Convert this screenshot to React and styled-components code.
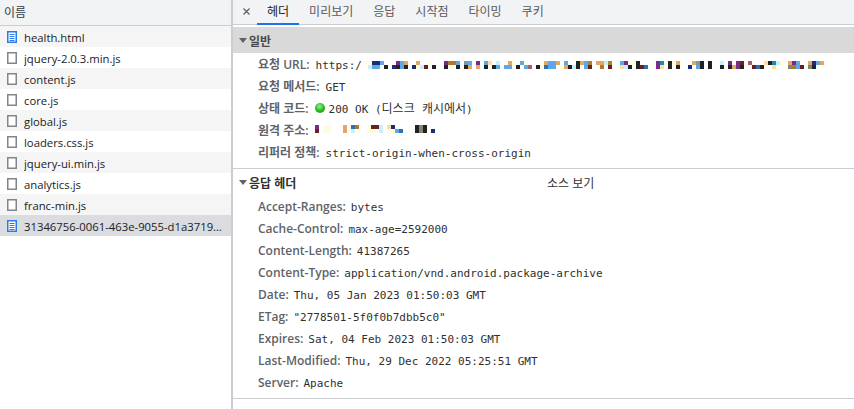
import React from 'react'
import styled, { createGlobalStyle } from 'styled-components'

const SANS = `"Open Sans", "Noto Sans CJK KR", sans-serif`
const MONO = `"DejaVu Sans Mono", "Noto Sans CJK KR", monospace`

const files = [
  { name: 'health.html', doc: true },
  { name: 'jquery-2.0.3.min.js' },
  { name: 'content.js' },
  { name: 'core.js' },
  { name: 'global.js' },
  { name: 'loaders.css.js' },
  { name: 'jquery-ui.min.js' },
  { name: 'analytics.js' },
  { name: 'franc-min.js' },
  { name: '31346756-0061-463e-9055-d1a3719c0e5a.apk', doc: true, selected: true }
]

const tabs = ['헤더', '미리보기', '응답', '시작점', '타이밍', '쿠키']

const responseHeaders = [
  ['Accept-Ranges', 'bytes'],
  ['Cache-Control', 'max-age=2592000'],
  ['Content-Length', '41387265'],
  ['Content-Type', 'application/vnd.android.package-archive'],
  ['Date', 'Thu, 05 Jan 2023 01:50:03 GMT'],
  ['ETag', '"2778501-5f0f0b7dbb5c0"'],
  ['Expires', 'Sat, 04 Feb 2023 01:50:03 GMT'],
  ['Last-Modified', 'Thu, 29 Dec 2022 05:25:51 GMT'],
  ['Server', 'Apache']
]

// colours of the mosaic that hides the url and the ip
const mosaicColors = {
  p: '#fffde0',
  l: '#ffdca0',
  c: '#c8f0fa',
  b: '#5da9e8',
  B: '#2f6fb5',
  n: '#1d2a7a',
  u: '#7a2a8a',
  o: '#e3a862',
  r: '#b5762a',
  v: '#a08a30',
  t: '#1d8ab0',
  g: '#7a9aa0',
  k: '#222222',
  d: '#6a2020',
  m: '#a06070',
  G: '#7a8a70'
}

// "<screen x><colour>", two rows of 4px cells
const urlRows = [
  '364p 368p 372n 376n 380b 392p 396u 400b 404o 416o 428p 444u 448r 452r 456b 464g 468b 476u 484b 488l 496c 508o 512p 520b 524p 540p 544o 548b 552b 556o 564b 576k 580o 584b 588v 596o 600o 604c 608v 620b 624u 628p 632p 636k 652p 656u 660t 664p 668k 672p 676o 692o 696g 700k 708k 720c 728u 736u 740d 748m 764l 768k 772t 776c 780p 788o 792u 796b 808o 812n 816b 820o',
  '368c 372b 376b 384k 392n 396k 400b 404k 412n 416p 420c 424d 432k 444k 448p 456k 464k 468o 476o 484k 492k 496b 504b 508b 516k 524b 528m 536k 540p 544B 548b 552b 560p 564o 568k 572c 576k 584b 588d 600r 608d 620l 624c 628k 636k 640d 644B 656u 660l 668k 676k 688n 696b 700k 708k 720k 728k 732o 736u 740k 752d 756B 760k 772l 788G 792r 796b 800d 808G 812k'
]

const ipRows = [
  '316u 324p 328p 344o 352B 356r 368p 372d 376d 380c 388l 392n 416k 420G 424k',
  '316d 324p 328p 344o 352c 368p 372p 380c 388p 392p 396b 400B 416k 420G 424k 432n'
]

const GlobalStyle = createGlobalStyle`
  html, body { margin: 0; padding: 0; background: #fff; }
  body { font-family: ${SANS}; font-size: 12px; color: #202124; }
`

const Page = styled.div`
  display: flex;
  width: 854px;
  height: 409px;
  overflow: hidden;
`

const Sidebar = styled.div`
  width: 231px;
  flex: none;
  border-right: 2px solid #cbcdd1;
`

const NameHeader = styled.div`
  height: 25px;
  line-height: 25px;
  padding-left: 4px;
  background: #f1f3f4;
  border-bottom: 1px solid #cbcdd1;
  color: #303942;
`

const FileRow = styled.div`
  display: flex;
  align-items: center;
  height: 21px;
  padding-left: 7px;
  gap: 5px;
  background: ${({ $selected, $odd }) => ($selected ? '#dadce0' : $odd ? '#f5f5f5' : '#fff')};
`

const FileName = styled.span`
  flex: 1;
  min-width: 0;
  padding-top: 1px;
  padding-right: 9px;
  font-size: 11.3px;
  overflow: hidden;
  white-space: nowrap;
  text-overflow: ellipsis;
`

const Details = styled.div`
  flex: 1;
  min-width: 0;
`

const TabBar = styled.div`
  display: flex;
  align-items: stretch;
  height: 24px;
  background: #f1f3f4;
  border-bottom: 1px solid #cbcdd1;
`

const CloseButton = styled.span`
  display: flex;
  align-items: center;
  justify-content: center;
  width: 24px;
  padding: 0 0 2px 2px;
  box-sizing: border-box;
`

const Tab = styled.div`
  padding: 0 10px;
  line-height: 23px;
  color: ${({ $active }) => ($active ? '#202124' : '#5a5a5a')};
  border-bottom: 2px solid ${({ $active }) => ($active ? '#1a73e8' : 'transparent')};
  margin-bottom: -1px;
`

const Section = styled.div`
  border-bottom: 1px solid #cbcdd1;
  padding-bottom: 5px;
`

const GrayTitle = styled.div`
  display: flex;
  align-items: center;
  height: 26px;
  margin-top: 2px;
  padding-left: 6px;
  gap: 2px;
  background: #d9d9d9;
  font-weight: 700;
  color: #4a4a4a;
`

const PlainTitle = styled.div`
  display: flex;
  align-items: center;
  height: 26px;
  padding-left: 6px;
  gap: 2px;
  font-weight: 700;
  color: #303030;
`

const TitleText = styled.span`
  width: ${({ $width }) => ($width ? `${$width}px` : 'auto')};
  padding-top: 2px;
`

const ViewSource = styled.span`
  padding-top: 2px;
  font-weight: 400;
  color: #303030;
`

const Arrow = styled.span`
  width: 0;
  height: 0;
  border-left: 4px solid transparent;
  border-right: 4px solid transparent;
  border-top: 5px solid #5f6368;
`

const Row = styled.div`
  display: flex;
  align-items: baseline;
  height: 22px;
  line-height: 24px;
  padding-left: 25px;
  white-space: nowrap;
`

const Label = styled.span`
  font-weight: 600;
  color: #5f6368;
  margin-right: ${({ $gap }) => $gap || 5}px;
`

const Value = styled.span`
  font-family: ${MONO};
  font-size: 11px;
  color: #303030;
`

const CjkText = styled.span`
  font-size: 12px;
`

const Mosaic = styled.svg`
  display: block;
  flex: none;
  align-self: center;
  margin-left: ${({ $offset }) => $offset || 0}px;
`

const StatusDot = styled.span`
  width: 10px;
  height: 10px;
  flex: none;
  align-self: center;
  border-radius: 50%;
  margin-right: 4px;
  background: radial-gradient(circle at 45% 35%, #9cf08a, #23b51e 55%, #0c8f10);
`

const DocIcon = ({ doc }) => (
  <svg width='12' height='12' viewBox='0 0 12 12'>
    <rect x='.75' y='.75' width='8.5' height='10.5' fill='#fff' stroke={doc ? '#2a7de9' : '#80868b'} strokeWidth='1.5' />
    {doc && <path d='M2.5 3.5h5M2.5 5.5h5M2.5 7.5h5M2.5 9.5h5' stroke='#2a7de9' strokeWidth='1' />}
  </svg>
)

const CloseIcon = () => (
  <svg width='7' height='7' viewBox='0 0 7 7'>
    <path d='M.5 .5l6 6M6.5 .5l-6 6' stroke='#5f6368' strokeWidth='1.3' fill='none' />
  </svg>
)

const MosaicBlocks = ({ rows, originX, top, width, offset }) => (
  <Mosaic $offset={offset} width={width} height='10' viewBox={`0 0 ${width} 10`}>
    {rows.map((row, r) => row.split(' ').map((cell) => (
      <rect
        key={`${r}-${cell}`}
        x={parseInt(cell, 10) - originX}
        y={r * 4 + top}
        width='4'
        height='4'
        fill={mosaicColors[cell.slice(-1)]}
      />
    )))}
  </Mosaic>
)

export default function App () {
  return (
    <Page>
      <GlobalStyle />
      <Sidebar>
        <NameHeader>이름</NameHeader>
        {files.map((file, i) => (
          <FileRow key={file.name} $odd={i % 2 === 0} $selected={file.selected}>
            <DocIcon doc={file.doc} />
            <FileName>{file.name}</FileName>
          </FileRow>
        ))}
      </Sidebar>
      <Details>
        <TabBar>
          <CloseButton><CloseIcon /></CloseButton>
          {tabs.map((tab, i) => <Tab key={tab} $active={i === 0}>{tab}</Tab>)}
        </TabBar>
        <Section>
          <GrayTitle><Arrow /><TitleText>일반</TitleText></GrayTitle>
          <Row>
            <Label $gap={6}>요청 URL:</Label>
            <Value>https:/</Value>
            <MosaicBlocks rows={urlRows} originX={364} top={2} width={464} offset={2} />
          </Row>
          <Row><Label $gap={6}>요청 메서드:</Label><Value>GET</Value></Row>
          <Row>
            <Label $gap={6}>상태 코드:</Label>
            <StatusDot />
            <Value>200 OK (<CjkText>디스크 캐시에서</CjkText>)</Value>
          </Row>
          <Row>
            <Label $gap={6}>원격 주소:</Label>
            <MosaicBlocks rows={ipRows} originX={316} top={0} width={122} />
          </Row>
          <Row><Label $gap={6}>리퍼러 정책:</Label><Value>strict-origin-when-cross-origin</Value></Row>
        </Section>
        <Section>
          <PlainTitle>
            <Arrow />
            <TitleText $width={296}>응답 헤더</TitleText>
            <ViewSource>소스 보기</ViewSource>
          </PlainTitle>
          {responseHeaders.map(([name, value]) => (
            <Row key={name}><Label>{name}:</Label><Value>{value}</Value></Row>
          ))}
        </Section>
      </Details>
    </Page>
  )
}
